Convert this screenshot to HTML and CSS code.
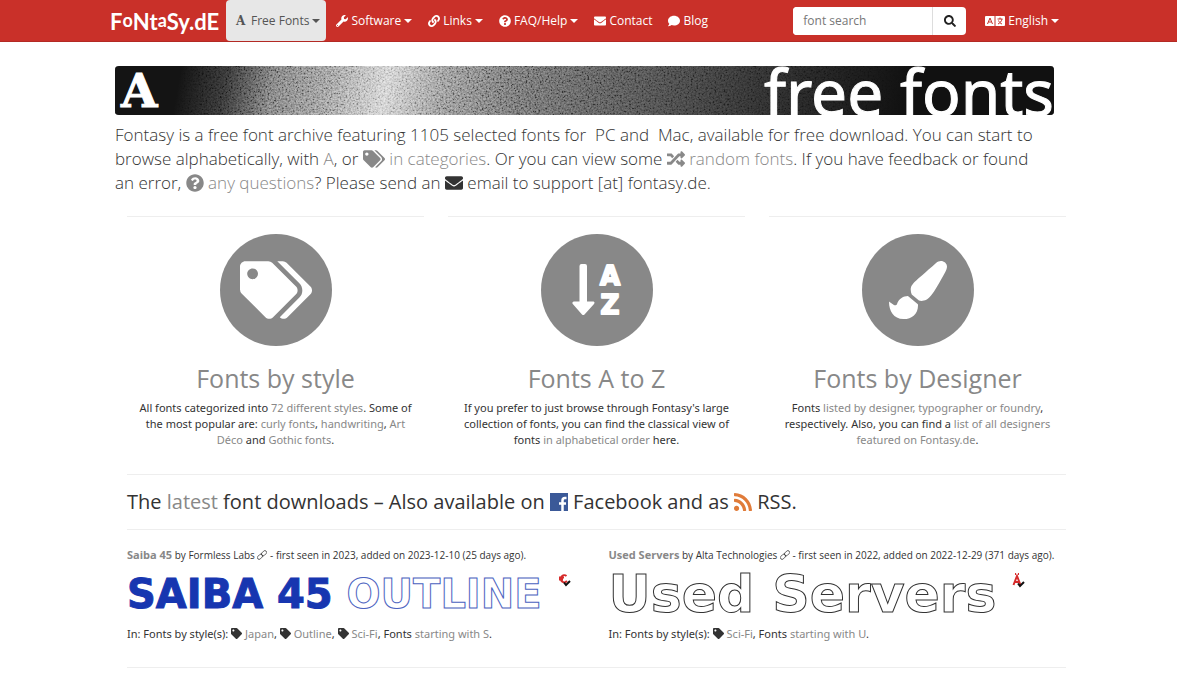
FILE: index.html
```html
<!DOCTYPE html>
<html lang="en">
<head>
<meta charset="utf-8">
<title>Fontasy.de – free fonts</title>
<link rel="stylesheet" href="styles.css">
</head>
<body>
<svg class="sprite" aria-hidden="true">
  <symbol id="tag" viewBox="0 0 512 512"><path d="M0 252.118V48C0 21.49 21.49 0 48 0h204.118a48 48 0 0 1 33.941 14.059l211.882 211.882c18.745 18.745 18.745 49.137 0 67.882L293.823 497.941c-18.745 18.745-49.137 18.745-67.882 0L14.059 286.059A48 48 0 0 1 0 252.118zM112 64c-26.51 0-48 21.49-48 48s21.49 48 48 48 48-21.49 48-48-21.49-48-48-48z"/></symbol>
  <symbol id="tags" viewBox="0 0 640 512"><path d="M497.941 225.941L286.059 14.059A48 48 0 0 0 252.118 0H48C21.49 0 0 21.49 0 48v204.118a48 48 0 0 0 14.059 33.941l211.882 211.882c18.744 18.745 49.136 18.746 67.882 0l204.118-204.118c18.745-18.745 18.745-49.137 0-67.882zM112 160c-26.51 0-48-21.49-48-48s21.49-48 48-48 48 21.49 48 48-21.49 48-48 48zm513.941 133.823L421.823 497.941c-18.745 18.745-49.137 18.745-67.882 0l-.36-.36L527.64 323.522c16.999-16.999 26.36-39.6 26.36-63.64s-9.362-46.641-26.36-63.64L331.397 0h48.721a48 48 0 0 1 33.941 14.059l211.882 211.882c18.745 18.745 18.745 49.137 0 67.882z"/></symbol>
  <symbol id="wrench" viewBox="0 0 512 512"><path d="M507.73 109.1c-2.24-9.03-13.54-12.09-20.12-5.51l-74.36 74.36-67.88-11.31-11.31-67.88 74.36-74.36c6.62-6.62 3.43-17.9-5.66-20.16-47.38-11.74-99.55.91-136.58 37.93-39.64 39.64-50.55 97.1-34.05 147.2L18.74 402.76c-24.99 24.99-24.99 65.51 0 90.5 24.99 24.99 65.51 24.99 90.5 0l213.21-213.21c50.12 16.71 107.47 5.68 147.37-34.22 37.07-37.07 49.7-89.32 37.91-136.73zM64 472c-13.25 0-24-10.75-24-24 0-13.26 10.75-24 24-24s24 10.74 24 24c0 13.25-10.75 24-24 24z"/></symbol>
  <symbol id="link" viewBox="0 0 512 512"><path d="M326.612 185.391c59.747 59.809 58.927 155.698.36 214.59-.11.12-.24.25-.36.37l-67.2 67.2c-59.27 59.27-155.699 59.262-214.96 0-59.27-59.26-59.27-155.7 0-214.96l37.106-37.106c9.84-9.84 26.786-3.3 27.294 10.606.648 17.722 3.826 35.527 9.69 52.721 1.986 5.822.567 12.262-3.783 16.612l-13.087 13.087c-28.026 28.026-28.905 73.66-1.155 101.96 28.024 28.579 74.086 28.749 102.325.51l67.2-67.19c28.191-28.191 28.073-73.757 0-101.83-3.701-3.694-7.429-6.564-10.341-8.569a16.037 16.037 0 0 1-6.947-12.606c-.396-10.567 3.348-21.456 11.698-29.806l21.054-21.055c5.521-5.521 14.182-6.199 20.584-1.731a152.482 152.482 0 0 1 20.522 17.197zM467.547 44.449c-59.261-59.262-155.69-59.27-214.96 0l-67.2 67.2c-.12.12-.25.25-.36.37-58.566 58.892-59.387 154.781.36 214.59a152.454 152.454 0 0 0 20.521 17.196c6.402 4.468 15.064 3.789 20.584-1.731l21.054-21.055c8.35-8.35 12.094-19.239 11.698-29.806a16.037 16.037 0 0 0-6.947-12.606c-2.912-2.005-6.64-4.875-10.341-8.569-28.073-28.073-28.191-73.639 0-101.83l67.2-67.19c28.239-28.239 74.3-28.069 102.325.51 27.75 28.3 26.872 73.934-1.155 101.96l-13.087 13.087c-4.35 4.35-5.769 10.79-3.783 16.612 5.864 17.194 9.042 34.999 9.69 52.721.509 13.906 17.454 20.446 27.294 10.606l37.106-37.106c59.271-59.259 59.271-155.699.001-214.959z"/></symbol>
  <symbol id="question" viewBox="0 0 512 512"><path d="M504 256c0 136.997-111.043 248-248 248S8 392.997 8 256C8 119.083 119.043 8 256 8s248 111.083 248 248zM262.655 90c-54.497 0-89.255 22.957-116.549 63.758-3.536 5.286-2.353 12.415 2.715 16.258l34.699 26.31c5.205 3.947 12.621 3.008 16.665-2.122 17.864-22.658 30.113-35.797 57.303-35.797 20.429 0 45.698 13.148 45.698 32.958 0 14.976-12.363 22.667-32.534 33.976C247.128 238.528 216 254.941 216 296v4c0 6.627 5.373 12 12 12h56c6.627 0 12-5.373 12-12v-1.333c0-28.462 83.186-29.647 83.186-106.667 0-58.002-60.165-102-116.531-102zM256 338c-25.365 0-46 20.635-46 46 0 25.364 20.635 46 46 46s46-20.636 46-46c0-25.365-20.635-46-46-46z"/></symbol>
  <symbol id="envelope" viewBox="0 0 512 512"><path d="M502.3 190.8c3.9-3.1 9.7-.2 9.7 4.7V400c0 26.5-21.5 48-48 48H48c-26.5 0-48-21.5-48-48V195.6c0-5 5.7-7.8 9.7-4.7 22.4 17.4 52.1 39.5 154.1 113.6 21.1 15.4 56.7 47.8 92.2 47.6 35.7.3 72-32.8 92.3-47.6 102-74.1 131.6-96.3 154-113.7zM256 320c23.2.4 56.6-29.2 73.4-41.4 132.7-96.3 142.8-104.7 173.4-128.7 5.8-4.5 9.2-11.5 9.2-18.9v-19c0-26.5-21.5-48-48-48H48c-26.5 0-48 21.5-48 48v19c0 7.4 3.4 14.3 9.2 18.9 30.6 23.9 40.7 32.4 173.4 128.7 16.8 12.2 50.2 41.8 73.4 41.4z"/></symbol>
  <symbol id="comment" viewBox="0 0 512 512"><path d="M256 32C114.6 32 0 125.1 0 240c0 49.6 21.4 95 57 130.7C44.5 421.1 2.7 466 2.2 466.5c-2.2 2.3-2.8 5.7-1.5 8.7S4.8 480 8 480c66.3 0 116-31.8 140.6-51.4 32.7 12.3 69 19.4 107.4 19.4 141.4 0 256-93.1 256-208S397.4 32 256 32z"/></symbol>
  <symbol id="search" viewBox="0 0 512 512"><path d="M505 442.7L405.3 343c-4.5-4.5-10.6-7-17-7H372c27.6-35.3 44-79.7 44-128C416 93.1 322.9 0 208 0S0 93.1 0 208s93.1 208 208 208c48.3 0 92.7-16.4 128-44v16.3c0 6.4 2.5 12.5 7 17l99.7 99.7c9.4 9.4 24.6 9.4 33.9 0l28.3-28.3c9.4-9.4 9.4-24.6.1-34zM208 336c-70.7 0-128-57.2-128-128 0-70.7 57.2-128 128-128 70.7 0 128 57.2 128 128 0 70.7-57.2 128-128 128z"/></symbol>
  <symbol id="random" viewBox="0 0 512 512"><path d="M504.971 359.029c9.373 9.373 9.373 24.569 0 33.941l-80 79.984c-15.01 15.01-40.971 4.49-40.971-16.971V416h-58.785a12.004 12.004 0 0 1-8.773-3.812l-70.556-75.596 53.333-57.143L352 336h32v-39.981c0-21.438 25.943-31.998 40.971-16.971l80 79.981zM12 176h84l52.781 56.551 53.333-57.143-70.556-75.596A11.999 11.999 0 0 0 122.785 96H12c-6.627 0-12 5.373-12 12v56c0 6.627 5.373 12 12 12zm372 0v39.984c0 21.46 25.961 31.98 40.971 16.971l80-79.984c9.373-9.373 9.373-24.569 0-33.941l-80-79.981C409.943 24.021 384 34.582 384 56.019V96h-58.785a12.004 12.004 0 0 0-8.773 3.812L96 336H12c-6.627 0-12 5.373-12 12v56c0 6.627 5.373 12 12 12h110.785c3.326 0 6.503-1.381 8.773-3.812L352 176h32z"/></symbol>
  <symbol id="brush" viewBox="0 0 512 512"><path d="M167.02 309.34c-40.12 2.58-76.53 17.86-97.19 72.3-2.35 6.21-8 9.98-14.59 9.98-11.11 0-45.46-27.67-55.25-34.35C0 439.62 37.93 512 128 512c75.86 0 128-43.77 128-120.19 0-3.11-.65-6.08-.97-9.13l-88.01-73.34zM457.89 0c-15.16 0-29.37 6.71-40.21 16.45C213.27 199.05 192 203.34 192 257.09c0 13.7 3.25 26.76 8.73 38.7l63.82 53.18c7.21 1.8 14.64 3.03 22.39 3.03 62.11 0 98.11-45.47 211.16-256.46 7.38-14.35 13.9-29.85 13.9-45.99C512 20.64 486 0 457.89 0z"/></symbol>
  <symbol id="rss" viewBox="0 32 448 448"><path d="M128.081 415.959c0 35.369-28.672 64.041-64.041 64.041S0 451.328 0 415.959s28.672-64.041 64.041-64.041 64.04 28.673 64.04 64.041zm175.66 47.25c-8.354-154.6-132.185-278.587-286.95-286.95C7.656 175.765 0 183.105 0 192.253v48.069c0 8.415 6.49 15.472 14.887 16.018 111.832 7.284 201.473 96.702 208.772 208.772.547 8.397 7.604 14.887 16.018 14.887h48.069c9.149.001 16.489-7.655 15.995-16.79zm144.249.288C439.596 229.677 251.465 40.445 16.503 32.01 7.473 31.686 0 38.981 0 48.016v48.068c0 8.625 6.835 15.645 15.453 15.999 191.179 7.839 344.627 161.316 352.465 352.465.353 8.618 7.373 15.453 15.999 15.453h48.068c9.034-.001 16.329-7.474 16.005-16.504z"/></symbol>
  <symbol id="chain" viewBox="0 0 20 20"><g fill="none" stroke="currentColor" stroke-width="1.500"><rect x="0" y="10" width="12" height="7" rx="3.500" transform="rotate(-45 6 13.500)"/><rect x="8" y="3" width="12" height="7" rx="3.500" transform="rotate(-45 14 6.500)"/></g></symbol>
</svg>

<header class="navbar">
  <a class="logo" href="#">F<span class="logo-low">o</span>Nt<span class="logo-low">a</span>Sy.dE</a>
  <nav class="menu">
    <button class="item active"><b class="slab">A</b>Free Fonts<i class="caret"></i></button>
    <button class="item"><svg class="ico"><use href="#wrench"/></svg>Software<i class="caret"></i></button>
    <button class="item"><svg class="ico"><use href="#link"/></svg>Links<i class="caret"></i></button>
    <button class="item"><svg class="ico"><use href="#question"/></svg>FAQ/Help<i class="caret"></i></button>
    <a class="item" href="#"><svg class="ico"><use href="#envelope"/></svg>Contact</a>
    <a class="item" href="#"><svg class="ico"><use href="#comment"/></svg>Blog</a>
  </nav>
  <form class="search">
    <input type="text" placeholder="font search" aria-label="font search">
    <button type="button" aria-label="Search"><svg class="ico"><use href="#search"/></svg></button>
  </form>
  <button class="item lang"><svg class="lang-ico" viewBox="0 0 20 10"><rect width="20" height="10" rx="1" fill="#fff"/><path d="M10 0v10M2.500 8L5 2l2.500 6M3.500 6h3M12.500 3h5M15 1.500V3M17 3c-.5 2.500-2 4-4 5M13.500 4.500c.5 1.500 2 3 3.500 3.500" fill="none" stroke="#c93029"/></svg>English<i class="caret"></i></button>
</header>

<main class="page">
  <section class="intro">
    <div class="banner">
      <svg class="grain" aria-hidden="true">
        <filter id="noise" x="0" y="0" width="100%" height="100%">
          <feTurbulence type="fractalNoise" baseFrequency="0.55" numOctaves="3" seed="8"/>
          <feColorMatrix values="2 0 0 0 -0.500  2 0 0 0 -0.500  2 0 0 0 -0.500  0 0 0 0 1"/>
        </filter>
        <rect width="100%" height="100%" filter="url(#noise)"/>
      </svg>
      <span class="banner-a">A</span>
      <span class="banner-title">free fonts</span>
    </div>
    <p class="lead">Fontasy is a free font archive featuring 1105 selected fonts for &nbsp;PC and &nbsp;Mac, available for free download. You can start to browse alphabetically, with <a href="#">A</a>, or <a href="#"><svg class="ico wide"><use href="#tags"/></svg> in categories</a>. Or you can view some <a href="#"><svg class="ico"><use href="#random"/></svg> random fonts</a>. If you have feedback or found an error, <a href="#"><svg class="ico"><use href="#question"/></svg> any questions</a>? Please send an <svg class="ico"><use href="#envelope"/></svg> email to support [at] fontasy.de.</p>
  </section>

  <section class="features">
    <article class="feature">
      <a class="disc" href="#" aria-label="Fonts by style"><svg class="disc-tags"><use href="#tags"/></svg></a>
      <h2><a href="#">Fonts by style</a></h2>
      <p>All fonts categorized into <a href="#">72 different styles</a>. Some of the most popular are: <a href="#">curly fonts</a>, <a href="#">handwriting</a>, <a href="#">Art Déco</a> and <a href="#">Gothic fonts</a>.</p>
    </article>
    <article class="feature">
      <a class="disc" href="#" aria-label="Fonts A to Z"><svg class="disc-sort" viewBox="0 0 50 54"><path d="M7.500 3a2 2 0 0 1 2-2h3.500a2 2 0 0 1 2 2v35.500h6c1.500 0 2 1.500 1 2.500L12.500 51.500a2 2 0 0 1-2.500 0L.8 41c-1-1 0-2.500 1-2.500h5.700z"/><text x="38" y="22" text-anchor="middle">A</text><text x="38" y="51" text-anchor="middle">Z</text></svg></a>
      <h2><a href="#">Fonts A to Z</a></h2>
      <p>If you prefer to just browse through Fontasy's large collection of fonts, you can find the classical view of fonts <a href="#">in alphabetical order</a> here.</p>
    </article>
    <article class="feature">
      <a class="disc" href="#" aria-label="Fonts by Designer"><svg class="disc-brush"><use href="#brush"/></svg></a>
      <h2><a href="#">Fonts by Designer</a></h2>
      <p>Fonts <a href="#">listed by designer, typographer or foundry</a>, respectively. Also, you can find a <a href="#">list of all designers featured on Fontasy.de</a>.</p>
    </article>
  </section>

  <h3 class="latest">The <a href="#">latest</a> font downloads – Also available on <svg class="ico" viewBox="0 0 18 18"><rect width="18" height="18" fill="#3b5998"/><path d="M12.500 18v-7M9 10.500h7M12.500 12V7.500q0-2.500 2.500-2.500h1.500" fill="none" stroke="#fff" stroke-width="2.500"/></svg> Facebook and as <svg class="ico rss"><use href="#rss"/></svg> RSS.</h3>

  <section class="downloads">
    <article class="font">
      <p class="meta"><a href="#">Saiba 45</a> by Formless Labs <svg class="ico"><use href="#chain"/></svg> - first seen in 2023, added on 2023-12-10 (25 days ago).</p>
      <div class="sample blue"><span>SAIBA 45 <span class="hollow">OUTLINE</span></span>
        <svg class="badge" viewBox="0 0 13 15"><path d="M8.500 3A3.500 3.500 0 1 0 9 8M1 4.500h5M1 6.500h4" fill="none" stroke="#d62b2b" stroke-width="2"/><path d="M6 9.500l2 2.500 4-4" fill="none" stroke="#111" stroke-width="2"/></svg>
      </div>
      <p class="styles">In: Fonts by style(s): <svg class="ico"><use href="#tag"/></svg> <a href="#">Japan</a>, <svg class="ico"><use href="#tag"/></svg> <a href="#">Outline</a>, <svg class="ico"><use href="#tag"/></svg> <a href="#">Sci-Fi</a>, Fonts <a href="#">starting with S</a>.</p>
    </article>
    <article class="font">
      <p class="meta"><a href="#">Used Servers</a> by Alta Technologies <svg class="ico"><use href="#chain"/></svg> - first seen in 2022, added on 2022-12-29 (371 days ago).</p>
      <div class="sample large"><span class="hollow">Used Servers</span>
        <svg class="badge" viewBox="0 0 13 15"><path d="M1.500 12L5 3l3.500 9M3 9h4M3 1h1M6 1h1" fill="none" stroke="#d62b2b" stroke-width="2"/><path d="M6 10.500l2 2.500 4-4" fill="none" stroke="#111" stroke-width="2"/></svg>
      </div>
      <p class="styles">In: Fonts by style(s): <svg class="ico"><use href="#tag"/></svg> <a href="#">Sci-Fi</a>, Fonts <a href="#">starting with U</a>.</p>
    </article>
  </section>
</main>
</body>
</html>
```
FILE: styles.css
```css
* { box-sizing: border-box; }

body {
  margin: 0 23px 0 0;
  background: #fff;
  color: #333;
  font-family: "Open Sans", "Noto Sans", sans-serif;
  font-size: 11px;
}

a { color: #888; text-decoration: none; }
p, h2, h3 { margin: 0; font-weight: 400; }
button { border: 0; background: none; font: inherit; cursor: pointer; }
.sprite { position: absolute; width: 0; height: 0; }
.ico { width: 12px; height: 12px; fill: currentColor; }

/* top bar */
.navbar {
  display: flex;
  align-items: center;
  height: 42px;
  padding: 0 110px;
  background: #c93029;
  border-bottom: 1px solid #b32a24;
}
.logo {
  width: 116px;
  color: #fff;
  font-family: Lato, sans-serif;
  font-size: 22px;
  font-weight: 700;
  line-height: 40px;
}
.logo-low { font-size: 18px; vertical-align: 3px; }
.menu { display: flex; align-self: stretch; }
.item {
  display: flex;
  align-items: center;
  gap: 3px;
  padding: 0 8px;
  color: #fff;
  font-size: 12px;
}
.item.active {
  margin-right: 2px;
  padding: 0 6px 0 10px;
  background: #e7e7e7;
  color: #555;
  border-radius: 4px;
}
.slab {
  width: 12px;
  font-family: "DejaVu Serif", serif;
  text-align: left;
}
.caret {
  border: 4px solid transparent;
  border-top-color: currentColor;
  border-bottom: 0;
}
.search {
  display: flex;
  width: 173px;
  height: 28px;
  margin-left: auto;
  background: #fff;
  border-radius: 4px;
  overflow: hidden;
}
.search input {
  flex: 1;
  min-width: 0;
  padding: 0 10px;
  border: 0;
  border-right: 1px solid #ddd;
  font: inherit;
  font-size: 12px;
}
.search input::placeholder { color: #777; }
.search button { width: 33px; padding: 0; color: #222; }
.search .ico { display: block; margin: auto; }
.lang { margin-left: 11px; }
.lang-ico { width: 20px; height: 10px; }

/* intro */
.page { padding: 24px 111px 0 115px; }
.intro { margin-right: 12px; }
.banner {
  position: relative;
  display: flex;
  justify-content: space-between;
  height: 49px;
  overflow: hidden;
  border-radius: 4px;
  background: #111;
  color: #fff;
}
.grain {
  position: absolute;
  width: 100%;
  height: 100%;
}
.banner::after {
  content: "";
  position: absolute;
  inset: 0;
  background: linear-gradient(100deg, #141414 7%, rgba(30, 30, 30, .8) 12%, rgba(110, 110, 110, .6) 17%, rgba(160, 160, 160, .6) 23%, rgba(225, 225, 225, .75) 29%, rgba(150, 150, 150, .6) 35%, rgba(95, 95, 95, .6) 42%, rgba(60, 60, 60, .75) 56%, rgba(30, 30, 30, .88) 70%, #111 84%);
}
.banner-a, .banner-title { position: relative; z-index: 1; -webkit-text-stroke: 1px #fff; }
.banner-a {
  padding-left: 6px;
  font: 700 47px/49px "DejaVu Serif", serif;
}
.banner-title { font: 400 64px/51px "Noto Sans", sans-serif; }
.lead {
  padding: 8px 8px 0 0;
  font-size: 17px;
  font-weight: 300;
  line-height: 24px;
}
.lead .ico { width: 18px; height: 18px; vertical-align: -3px; }
.lead .wide { width: 22px; }

/* three entry points */
.features {
  display: grid;
  grid-template-columns: repeat(3, 1fr);
  gap: 24px;
  margin: 21px 0 0 12px;
}
.feature {
  padding: 17px 6px 26px;
  border-top: 1px solid #eee;
  text-align: center;
}
.feature p { font-family: "Noto Sans", sans-serif; line-height: 16px; }
.disc {
  display: flex;
  align-items: center;
  justify-content: center;
  width: 112px;
  height: 112px;
  margin: 0 auto;
  border-radius: 50%;
  background: #888;
  fill: #fff;
}
.disc-tags { width: 72px; height: 58px; }
.disc-brush { width: 58px; height: 58px; }
.disc-sort {
  width: 50px;
  height: 54px;
  font: 700 26px "DejaVu Sans", sans-serif;
}
.disc-sort text { stroke: #fff; stroke-width: 2px; stroke-linejoin: round; }
.feature h2 {
  margin: 14px 0 4px;
  font-size: 25px;
  line-height: 36px;
}

/* latest downloads */
.latest {
  margin-left: 12px;
  padding: 12px 0;
  border: 1px solid #eee;
  border-width: 1px 0;
  font-size: 20px;
  line-height: 30px;
}
.latest .ico { width: 18px; height: 18px; vertical-align: -2px; }
.latest .rss { color: #e07b39; }
.downloads {
  display: grid;
  grid-template-columns: 1fr 1fr;
  column-gap: 24px;
  margin-left: 12px;
  padding-bottom: 25px;
  border-bottom: 1px solid #eee;
}
.font { padding-top: 17px; }
.meta { font-size: 10px; line-height: 16px; white-space: nowrap; }
.meta a { font-size: 11px; font-weight: 700; }
.meta .ico { width: 10px; height: 10px; vertical-align: -1px; }
.sample {
  display: flex;
  gap: 16px;
  height: 63px;
  font: 700 40px/63px "DejaVu Sans", sans-serif;
  white-space: nowrap;
}
.blue { color: #1736b0; -webkit-text-stroke: 1px #1736b0; }
.large { font-size: 52px; color: #333; }
.hollow { color: transparent; -webkit-text-stroke: 1px #333; }
.blue .hollow { -webkit-text-stroke-color: #4a62c0; }
.badge { width: 13px; height: 15px; margin-top: 10px; }
.styles { font-family: "Noto Sans", sans-serif; line-height: 16px; }
.styles .ico { width: 11px; height: 11px; vertical-align: -1px; }
```
